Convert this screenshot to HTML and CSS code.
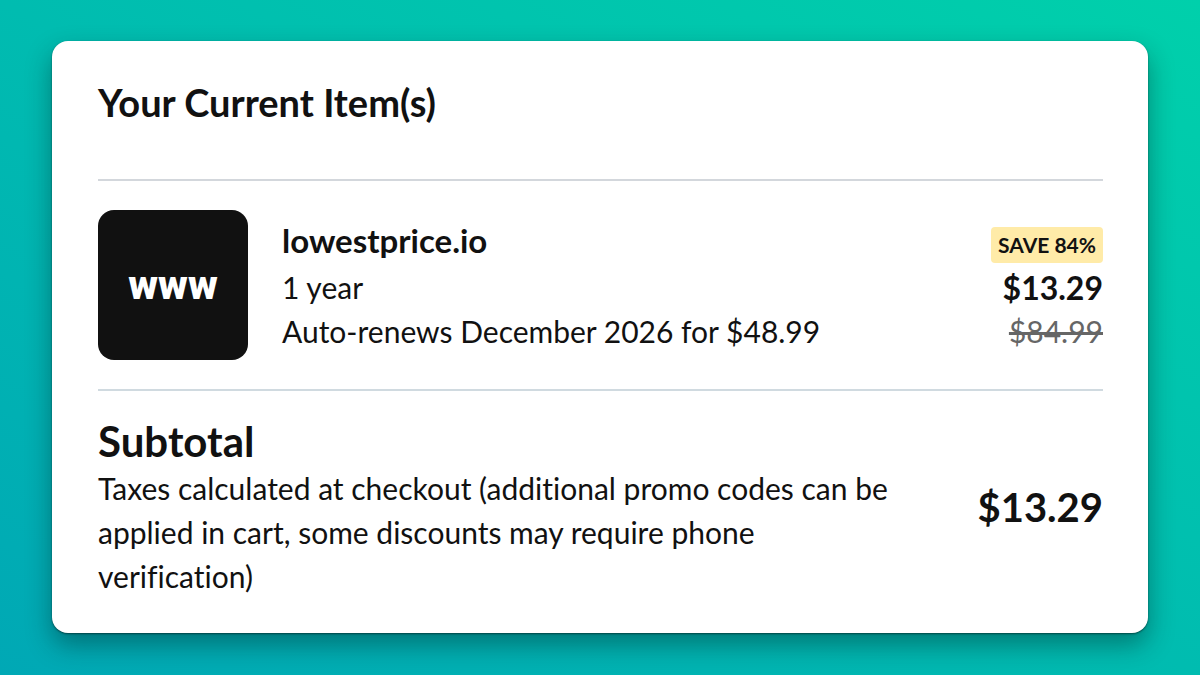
FILE: index.html
```html
<!DOCTYPE html>
<html lang="en">
<head>
<meta charset="utf-8">
<title>Your Current Item(s)</title>
<meta name="viewport" content="width=device-width, initial-scale=1">
<link rel="stylesheet" href="styles.css">
</head>
<body>
<main class="card">
  <h1 class="title">Your Current Item(s)</h1>
  <section class="item">
    <div class="thumb">www</div>
    <div class="details">
      <h2 class="name">lowestprice.io</h2>
      <p class="text">1 year</p>
      <p class="text">Auto-renews December 2026 for $48.99</p>
    </div>
    <div class="pricing">
      <span class="badge">SAVE 84%</span>
      <strong class="price">$13.29</strong>
      <s class="old-price">$84.99</s>
    </div>
  </section>
  <section class="summary">
    <div class="summary-info">
      <h2 class="subtotal">Subtotal</h2>
      <p class="text">Taxes calculated at checkout (additional promo codes can be applied in cart, some discounts may require phone verification)</p>
    </div>
    <strong class="total">$13.29</strong>
  </section>
</main>
</body>
</html>
```

FILE: styles.css
```css
* {
  box-sizing: border-box;
}

body {
  margin: 0;
  min-height: 100vh;
  padding: 41px 52px;
  background: linear-gradient(to top right, #00a8b5, #00d0ab);
  color: #111;
  font-family: Lato, sans-serif;
  font-variant-ligatures: no-common-ligatures;
}

h1,
h2,
p {
  margin: 0;
}

.card {
  padding: 38px 45px 35px 46px;
  border-radius: 16px;
  background: #fff;
  box-shadow: 0 12px 26px rgba(0, 30, 30, 0.4), 0 1px 2px rgba(0, 0, 0, 0.5);
}

.title {
  padding-bottom: 54px;
  font-size: 38px;
  line-height: 46px;
}

.item {
  display: flex;
  align-items: center;
  gap: 34px;
  padding: 29px 0;
  border-top: 2px solid #d3d7dc;
  border-bottom: 2px solid #d0dae0;
}

.thumb {
  display: flex;
  align-items: center;
  justify-content: center;
  width: 150px;
  height: 150px;
  flex: none;
  border-radius: 16px;
  background: #111;
  color: #fff;
  font-family: Roboto, sans-serif;
  font-size: 41px;
  font-weight: 900;
  line-height: 46px;
}

.details {
  flex: 1;
}

.name {
  padding-bottom: 2px;
  font-size: 33px;
  line-height: 46px;
}

.text {
  font-size: 30px;
  line-height: 44px;
}

.pricing {
  display: flex;
  flex-direction: column;
  align-items: flex-end;
  align-self: flex-start;
  padding-top: 17px;
}

.badge {
  padding: 0 7px;
  border-radius: 4px;
  background: #ffeba8;
  font-size: 21px;
  font-weight: 700;
  line-height: 36px;
}

.price {
  margin-top: 4px;
  font-size: 32px;
  line-height: 42px;
}

.old-price {
  color: #666;
  font-size: 30px;
  line-height: 44px;
}

.summary {
  display: flex;
  align-items: center;
  justify-content: space-between;
  gap: 64px;
  padding-top: 25px;
}

.summary-info {
  max-width: 808px;
}

.subtotal {
  font-size: 42px;
  line-height: 50px;
}

.total {
  font-size: 40px;
}
```
